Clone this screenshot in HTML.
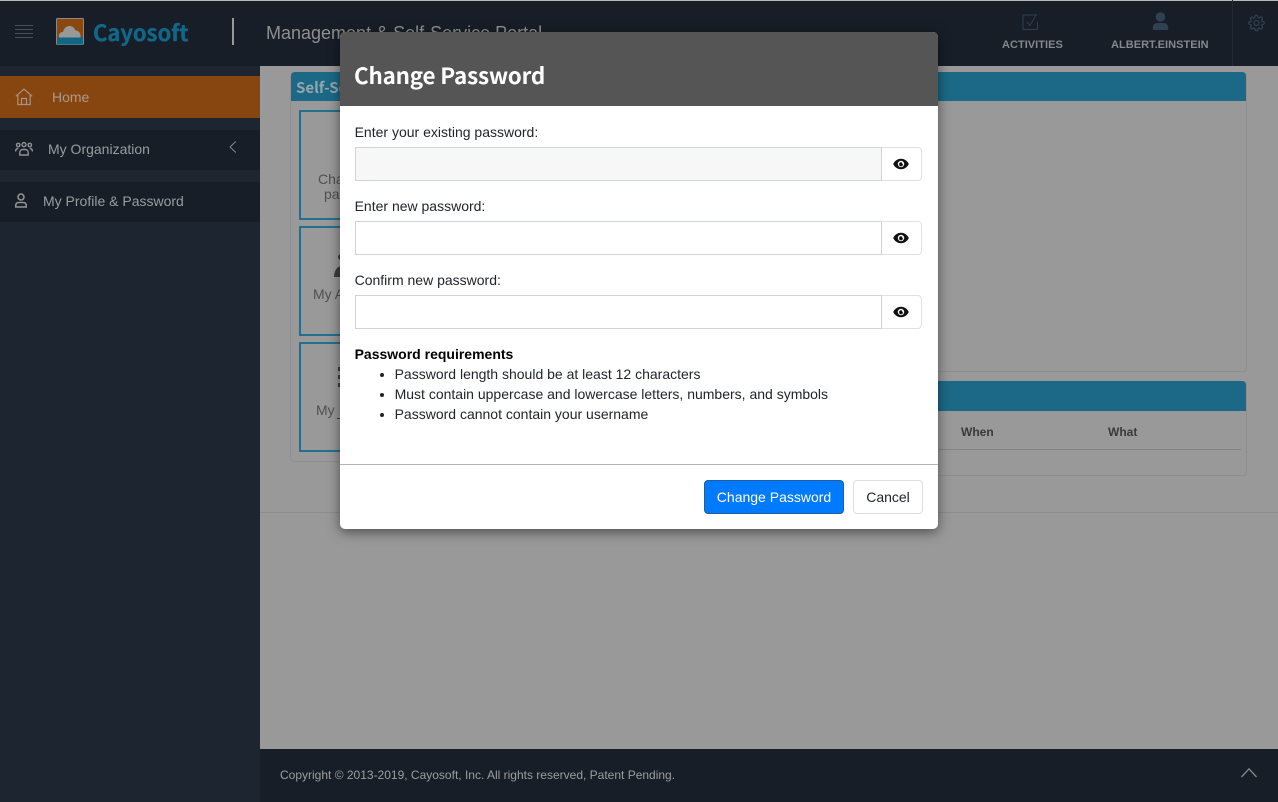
<!DOCTYPE html>
<html><head><meta charset="utf-8"><title>Change Password</title>
<style>
*{box-sizing:border-box}
html,body{margin:0;padding:0;width:1278px;height:802px;overflow:hidden;background:#999;font-family:"Liberation Sans",sans-serif;color:#000}
.a{position:absolute}
.t{position:absolute;white-space:nowrap}
.nav{position:absolute;left:0;width:260px;background:#171e27}
.navt{position:absolute;white-space:nowrap;font-size:14px;color:#9a9da1;line-height:16px}
.card{position:absolute;left:299px;width:200px;height:110px;border:2px solid #22708e}
.ct{position:absolute;white-space:nowrap;font-size:14px;color:#505050;line-height:16px}
.lbl{position:absolute;left:14.6px;font-size:14px;line-height:16px;color:#212529;white-space:nowrap}
.inp{position:absolute;left:15px;width:527px;height:34px;border:1px solid #ced4da;background:#fff}
.eyeb{position:absolute;left:541px;width:41px;height:34px;border:1px solid #dee2e6;border-left:1px solid #ced4da;border-radius:0 4px 4px 0;background:#fff}
.eyeb svg{position:absolute;left:11px;top:10px}
.hb{position:absolute;left:15px;width:18px;height:1px;background:#454e59}
li{line-height:20px}
</style></head><body>
<div class="a" style="left:0;top:0;width:1278px;height:802px;background:#999;overflow:hidden">

<!-- sidebar -->
<div class="a" style="left:0;top:66px;width:260px;height:736px;background:#1d2530"></div>
<!-- top bar -->
<div class="a" style="left:0;top:0;width:1278px;height:66px;background:#171e27"></div>
<div class="a" style="left:0;top:0;width:1278px;height:1px;background:#b8b8b8"></div>

<div class="hb" style="top:25px"></div>
<div class="hb" style="top:29px"></div>
<div class="hb" style="top:33px"></div>
<div class="hb" style="top:37px"></div>

<svg class="a" style="left:56px;top:18px" width="28" height="27" viewBox="0 0 28 27">
<rect x=".5" y=".5" width="27" height="26" rx="1" fill="#8a4710" stroke="#8a8a80"/>
<rect x="1" y="19.500" width="26" height="7" fill="#116585"/>
<path d="M3 19.500c-.6-3.400 1-5.500 4-5.500 .8-3.500 3-6 6.500-6 3 0 5 2 6 4.500 3.500 0 5.500 3 5 7z" fill="#999"/>
</svg>
<div class="t" style="left:93px;top:17px;font:700 22px/30px 'Noto Sans CJK JP','Liberation Sans',sans-serif;color:#126788;-webkit-text-stroke:.3px #126788">Cayosoft</div>
<div class="a" style="left:232px;top:18px;width:2px;height:27px;background:#999"></div>
<div class="t" style="left:266px;top:22px;font-size:18px;line-height:22px;color:#8f8f8f">Management &amp; Self-Service Portal</div>

<svg class="a" style="left:1022px;top:14px" width="17" height="17" viewBox="0 0 17 17" fill="none" stroke="#2f4050" stroke-width="1">
<path d="M15.500 8v7.500h-14.500v-14.500h14"/><path d="M5 8l3 3.500 6-10.500"/>
</svg>
<div class="t" style="left:1002px;top:39px;font-size:11px;font-weight:700;line-height:13px;color:#85888c;letter-spacing:.03px">ACTIVITIES</div>
<svg class="a" style="left:1152px;top:12px" width="17" height="18" viewBox="0 0 17 18" fill="#2f4050">
<circle cx="8.500" cy="5" r="4.800"/><path d="M.8 18v-2.500c0-3 2.200-4.500 4.700-4.500h6c2.500 0 4.700 1.500 4.700 4.500V18z"/>
</svg>
<div class="t" style="left:1111px;top:39px;font-size:11px;font-weight:700;line-height:13px;color:#85888c;letter-spacing:.03px">ALBERT.EINSTEIN</div>
<div class="a" style="left:1232px;top:0;width:1px;height:66px;background:#212a34"></div>
<svg class="a" style="left:1248px;top:14px" width="17" height="18" viewBox="0 0 24 24" fill="none" stroke="#2f4050" stroke-width="1.800">
<circle cx="12" cy="12" r="3.500"/>
<path d="M19.400 15a1.700 1.700 0 0 0 .3 1.800l.1.100a2 2 0 1 1-2.900 2.900l-.1-.1a1.700 1.700 0 0 0-2.800 1.200V21a2 2 0 1 1-4 0v-.1a1.700 1.700 0 0 0-2.900-1.100l-.1.100a2 2 0 1 1-2.800-2.900l.1-.1a1.700 1.700 0 0 0-1.200-2.800H3a2 2 0 1 1 0-4h.1a1.700 1.700 0 0 0 1.100-2.900l-.1-.1a2 2 0 1 1 2.900-2.800l.1.100a1.700 1.700 0 0 0 2.800-1.200V3a2 2 0 1 1 4 0v.1a1.700 1.700 0 0 0 2.900 1.100l.1-.1a2 2 0 1 1 2.800 2.900l-.1.100a1.700 1.700 0 0 0 1.200 2.800h.2a2 2 0 1 1 0 4h-.1a1.700 1.700 0 0 0-1.500 1.100z"/>
</svg>

<!-- nav -->
<div class="nav" style="top:76px;height:42px;background:#874610"></div>
<svg class="a" style="left:15px;top:88px" width="18" height="18" viewBox="0 0 18 18" fill="none" stroke="#a8927f" stroke-width="1.200">
<path d="M.8 8.300 9 1l8.200 7.300M2.800 7v9.500h12.400V7M6.500 16.500V10.500h5v6"/>
</svg>
<div class="navt" style="left:52px;top:89px;color:#a89a8d">Home</div>

<div class="nav" style="top:130px;height:40px"></div>
<svg class="a" style="left:15px;top:142px" width="18" height="14" viewBox="0 0 18 14" fill="none" stroke="#8f9296" stroke-width="1.400">
<circle cx="3.200" cy="3" r="1.700"/><circle cx="9" cy="2.600" r="2"/><circle cx="14.800" cy="3" r="1.700"/>
<path d="M.6 9.500c0-2 1-3 2.700-3M17.400 9.500c0-2-1-3-2.700-3M4.800 13v-2.500c0-2 1.500-3 3-3h2.400c1.500 0 3 1 3 3V13z"/>
</svg>
<div class="navt" style="left:48px;top:141px">My Organization</div>
<svg class="a" style="left:229px;top:141px" width="8" height="12" viewBox="0 0 8 12" fill="none" stroke="#85888c" stroke-width="1"><path d="M6.800.5 1 6l5.800 5.500"/></svg>

<div class="nav" style="top:182px;height:40px"></div>
<svg class="a" style="left:15px;top:193px" width="12" height="15" viewBox="0 0 12 15" fill="none" stroke="#8f9296" stroke-width="1.600">
<circle cx="6" cy="4" r="3"/><path d="M.8 14v-1.500c0-2 1.200-3 3-3h4.400c1.800 0 3 1 3 3V14z"/>
</svg>
<div class="navt" style="left:43px;top:193px">My Profile &amp; Password</div>

<!-- content -->
<div class="a" style="left:290px;top:72px;width:210px;height:390px;border:1px solid #8f8f8f;border-radius:4px"></div>
<div class="a" style="left:291px;top:72px;width:300px;height:29px;background:#1b6986;border-radius:4px 4px 0 0"></div>
<div class="t" style="left:296px;top:77px;font:700 15px/22px 'Noto Sans CJK JP','Liberation Sans',sans-serif;color:#96a5ac">Self-Service</div>
<div class="card" style="top:110px"></div>
<div class="ct" style="left:318px;top:171px">Cha</div>
<div class="ct" style="left:324px;top:186px">pa</div>
<div class="card" style="top:226px"></div>
<svg class="a" style="left:333px;top:252px" width="12" height="26" viewBox="0 0 12 26" fill="#3d3d3d"><circle cx="8" cy="5" r="3"/><path d="M1 25c0-6 3-11 8-11h3v11z"/></svg>
<div class="ct" style="left:313px;top:286px">My A</div>
<div class="card" style="top:342px"></div>
<div class="a" style="left:338px;top:367px;width:3px;height:22px;background:repeating-linear-gradient(#3d3d3d 0 4px,transparent 4px 8px)"></div>
<div class="ct" style="left:316px;top:402px">My</div>
<div class="a" style="left:337px;top:418px;width:4px;height:1px;background:#3d3d3d"></div>

<!-- right panels -->
<div class="a" style="left:930px;top:72px;width:317px;height:300px;border:1px solid #8f8f8f;border-left:0;border-radius:0 4px 4px 0"></div>
<div class="a" style="left:930px;top:72px;width:316px;height:29px;background:#1b6986;border-radius:0 4px 0 0"></div>
<div class="a" style="left:930px;top:381px;width:317px;height:95px;border:1px solid #8f8f8f;border-left:0;border-radius:0 4px 4px 0"></div>
<div class="a" style="left:930px;top:381px;width:316px;height:30px;background:#1b6986;border-radius:0 4px 0 0"></div>
<div class="t" style="left:961px;top:425px;font-size:12px;font-weight:700;line-height:15px;color:#3a3a3a">When</div>
<div class="t" style="left:1108px;top:425px;font-size:12px;font-weight:700;line-height:15px;color:#3a3a3a">What</div>
<div class="a" style="left:930px;top:449px;width:311px;height:1px;background:#848484"></div>
<div class="a" style="left:260px;top:512px;width:1018px;height:1px;background:#8e8e8e"></div>

<!-- footer -->
<div class="a" style="left:260px;top:749px;width:1018px;height:53px;background:#171e27"></div>
<div class="t" style="left:280px;top:768px;font-size:12px;line-height:15px;color:#9c9ea1">Copyright © 2013-2019, Cayosoft, Inc. All rights reserved, Patent Pending.</div>
<svg class="a" style="left:1241px;top:767px" width="16" height="11" viewBox="0 0 16 11" fill="none" stroke="#85888c" stroke-width="1.300"><path d="M.5 10 8 1.800 15.500 10"/></svg>

<!-- modal -->
<div class="a" style="left:340px;top:32px;width:598px;height:497px;background:#fff;border-radius:5px;box-shadow:0 3px 12px rgba(0,0,0,.5);overflow:hidden">
  <div class="a" style="left:0;top:0;width:598px;height:74px;background:#555"></div>
  <div class="t" style="left:14px;top:25px;font:700 22.4px/36px 'Noto Sans CJK JP','Liberation Sans',sans-serif;color:#fff;letter-spacing:-.2px">Change Password</div>

  <div class="lbl" style="top:92px">Enter your existing password:</div>
  <div class="inp" style="top:115px;background:#f7f7f7"></div>
  <div class="eyeb" style="top:115px"><svg width="16" height="12" viewBox="0 0 16 12"><path fill="#111" fill-rule="evenodd" d="M8 .8C4.500 .8 1.600 2.900 .2 6c1.400 3.100 4.300 5.200 7.800 5.200s6.400-2.100 7.800-5.200C14.400 2.900 11.500 .8 8 .8zm0 2a3.200 3.200 0 1 1 0 6.400 3.200 3.200 0 0 1 0-6.400z"/><path fill="#111" d="M8 4.200c.4 0 .7.100 1 .2a1 1 0 0 0 .9 1.500c.1.900-.2 1.800-1 2.200A1.900 1.900 0 0 1 6.100 6 2 2 0 0 1 8 4.200z"/></svg></div>

  <div class="lbl" style="top:166px">Enter new password:</div>
  <div class="inp" style="top:189px"></div>
  <div class="eyeb" style="top:189px"><svg width="16" height="12" viewBox="0 0 16 12"><path fill="#111" fill-rule="evenodd" d="M8 .8C4.500 .8 1.600 2.900 .2 6c1.400 3.100 4.300 5.200 7.800 5.200s6.400-2.100 7.800-5.200C14.400 2.900 11.500 .8 8 .8zm0 2a3.200 3.200 0 1 1 0 6.400 3.200 3.200 0 0 1 0-6.400z"/><path fill="#111" d="M8 4.200c.4 0 .7.100 1 .2a1 1 0 0 0 .9 1.500c.1.900-.2 1.800-1 2.200A1.900 1.900 0 0 1 6.100 6 2 2 0 0 1 8 4.200z"/></svg></div>

  <div class="lbl" style="top:240px">Confirm new password:</div>
  <div class="inp" style="top:263px"></div>
  <div class="eyeb" style="top:263px"><svg width="16" height="12" viewBox="0 0 16 12"><path fill="#111" fill-rule="evenodd" d="M8 .8C4.500 .8 1.600 2.900 .2 6c1.400 3.100 4.300 5.200 7.800 5.200s6.400-2.100 7.800-5.200C14.400 2.900 11.500 .8 8 .8zm0 2a3.200 3.200 0 1 1 0 6.400 3.200 3.200 0 0 1 0-6.400z"/><path fill="#111" d="M8 4.200c.4 0 .7.100 1 .2a1 1 0 0 0 .9 1.500c.1.900-.2 1.800-1 2.200A1.900 1.900 0 0 1 6.100 6 2 2 0 0 1 8 4.200z"/></svg></div>

  <div class="t" style="left:14.6px;top:314px;font-size:14px;font-weight:700;line-height:16px">Password requirements</div>
  <ul class="a" style="left:14.6px;top:332px;margin:0;padding:0 0 0 40px;font-size:14px;color:#212529;white-space:nowrap">
    <li>Password length should be at least 12 characters</li>
    <li>Must contain uppercase and lowercase letters, numbers, and symbols</li>
    <li>Password cannot contain your username</li>
  </ul>

  <div class="a" style="left:0;top:432px;width:598px;height:1px;background:#b4b4b4"></div>
  <div class="t" style="left:364px;top:448px;width:140px;height:34px;background:#007bff;border:1px solid #1f5f9f;border-radius:4px;color:#fff;font-size:14px;line-height:32px;text-align:center">Change Password</div>
  <div class="t" style="left:513px;top:448px;width:70px;height:34px;background:#fff;border:1px solid #dedede;border-radius:4px;color:#212529;font-size:14px;line-height:32px;text-align:center">Cancel</div>
</div>
</div>
</body></html>
